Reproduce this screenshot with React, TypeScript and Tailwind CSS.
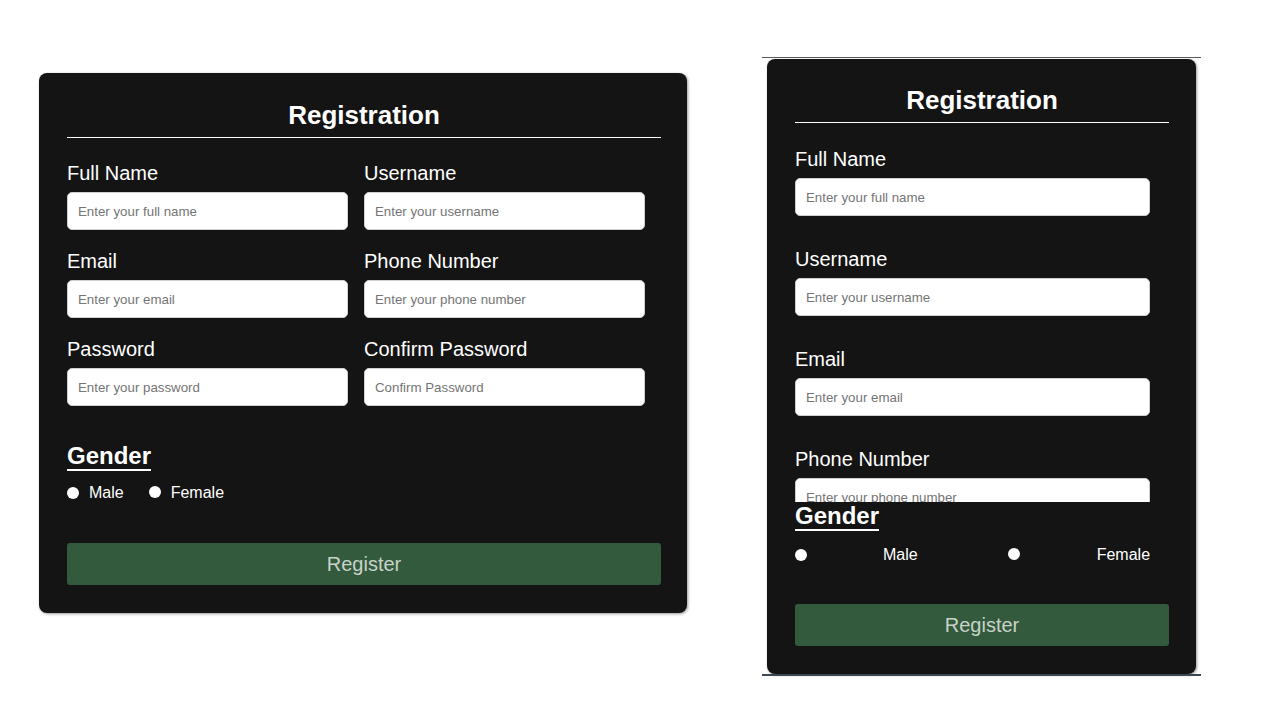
import React from "react";

const font = { fontFamily: '"Liberation Sans", Arial, sans-serif' };

function Field({ label, placeholder, w }: { label: string; placeholder: string; w: string }) {
  return (
    <div className="flex flex-col">
      <label className="block text-[20px] leading-[23px] text-white mb-[7px]">{label}</label>
      <input
        placeholder={placeholder}
        className={`${w} h-[38px] rounded-[5px] border border-[#cfcfcf] bg-white px-[10px] text-[13.3px] text-black placeholder:text-[#757575] outline-none`}
      />
    </div>
  );
}

function Dot() {
  return <span className="inline-block w-[12px] h-[12px] rounded-full bg-white shrink-0" />;
}

export default function App() {
  return (
    <div className="w-[1280px] h-[720px] bg-white flex items-start overflow-hidden" style={font}>
      {/* Desktop card */}
      <div className="ml-[39px] mt-[73px] w-[648px] bg-[#141414] rounded-[8px] pt-[27px] pl-[28px] pr-[26px] pb-[28px] shadow-[1px_1px_3px_rgba(0,0,0,0.4)]">
        <h2 className="text-[26px] leading-[30px] font-bold text-white text-center pb-[7px] border-b border-white">
          Registration
        </h2>
        <div className="mt-[24px] grid grid-cols-2 gap-y-[20px]">
          <Field label="Full Name" placeholder="Enter your full name" w="w-[281px]" />
          <Field label="Username" placeholder="Enter your username" w="w-[281px]" />
          <Field label="Email" placeholder="Enter your email" w="w-[281px]" />
          <Field label="Phone Number" placeholder="Enter your phone number" w="w-[281px]" />
          <Field label="Password" placeholder="Enter your password" w="w-[281px]" />
          <Field label="Confirm Password" placeholder="Confirm Password" w="w-[281px]" />
        </div>
        <div className="mt-[37px] flex">
          <span className="text-[24px] leading-[26px] font-bold text-white border-b-2 border-white">Gender</span>
        </div>
        <div className="mt-[13px] flex items-center h-[18px] text-[16px] leading-[18px] text-white">
          <Dot />
          <span className="ml-[10px]">Male</span>
          <span className="ml-[25px]"><Dot /></span>
          <span className="ml-[10px]">Female</span>
        </div>
        <button className="mt-[41px] w-full h-[42px] rounded-[3px] bg-[#335a3c] text-[20px] text-[#c8d2c8]">
          Register
        </button>
      </div>

      {/* Mobile card */}
      <div className="ml-[75px] mt-[57px] w-[439px] flex flex-col">
        <div className="h-[1px] bg-[#5a5a5a]" />
        <div className="mt-[1px] ml-[5px] w-[429px] bg-[#141414] rounded-[8px] pt-[26px] pl-[28px] pr-[27px] pb-[28px] shadow-[1px_1px_3px_rgba(0,0,0,0.4)]">
          <h2 className="text-[26px] leading-[30px] font-bold text-white text-center pb-[7px] border-b border-white">
            Registration
          </h2>
          <div className="h-[379px] overflow-hidden">
            <div className="pt-[25px] flex flex-col gap-[32px]">
              <Field label="Full Name" placeholder="Enter your full name" w="w-[355px]" />
              <Field label="Username" placeholder="Enter your username" w="w-[355px]" />
              <Field label="Email" placeholder="Enter your email" w="w-[355px]" />
              <Field label="Phone Number" placeholder="Enter your phone number" w="w-[355px]" />
              <Field label="Password" placeholder="Enter your password" w="w-[355px]" />
              <Field label="Confirm Password" placeholder="Confirm Password" w="w-[355px]" />
            </div>
          </div>
          <div className="mt-[1px] flex">
            <span className="text-[24px] leading-[26px] font-bold text-white border-b-2 border-white">Gender</span>
          </div>
          <div className="mt-[15px] flex items-center h-[18px] text-[16px] leading-[18px] text-white">
            <Dot />
            <span className="ml-[76px]">Male</span>
            <span className="ml-[90px]"><Dot /></span>
            <span className="ml-[77px]">Female</span>
          </div>
          <button className="mt-[40px] w-full h-[42px] rounded-[3px] bg-[#335a3c] text-[20px] text-[#c8d2c8]">
            Register
          </button>
        </div>
        <div className="h-[2px] bg-[#3b4752]" />
      </div>
    </div>
  );
}
